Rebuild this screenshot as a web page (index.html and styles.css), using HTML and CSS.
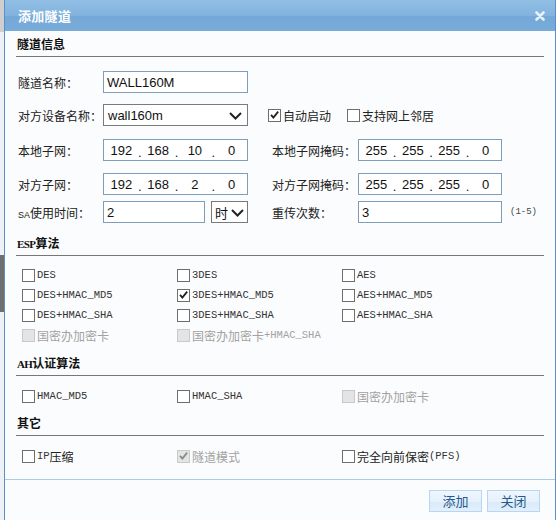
FILE: index.html
```html
<!DOCTYPE html>
<html>
<head>
  <meta charset="UTF-8">
  <title>添加隧道</title>
  <link rel="stylesheet" href="styles.css">
</head>
<body>
  <div class="dialog">
    <div class="dialog-title">
      <span class="title-text">添加隧道</span>
      <span class="close">
        <svg width="10" height="10" viewBox="0 0 10 10"><path d="M1.5 1.5 L8.5 8.5 M8.5 1.5 L1.5 8.5" stroke="#e8f1fa" stroke-width="2.6" stroke-linecap="round"/></svg>
      </span>
    </div>

    <div class="dialog-body">
      <h3 class="section first">隧道信息</h3>

      <div class="form-row r1">
        <span class="lbl">隧道名称：</span>
        <div class="field txt w145">WALL160M</div>
      </div>

      <div class="form-row r2">
        <span class="lbl">对方设备名称：</span>
        <div class="field sel w145">
          <span>wall160m</span>
          <svg class="chev" width="13" height="8" viewBox="0 0 13 8"><path d="M1 1 L6.5 6.5 L12 1" fill="none" stroke="#222" stroke-width="2"/></svg>
        </div>
        <label class="opt top first-opt"><span class="cb on"><svg width="12" height="12" viewBox="0 0 12 12"><path d="M2.2 5.8 L4.8 8.8 L10 2.4" fill="none" stroke="#222" stroke-width="2"/></svg></span>自动启动</label>
        <label class="opt top"><span class="cb"></span>支持网上邻居</label>
      </div>

      <div class="form-row r3">
        <span class="lbl">本地子网：</span>
        <div class="field ip w145">
          <span class="oct">192</span><span class="dot">.</span><span class="oct">168</span><span class="dot">.</span><span class="oct">10</span><span class="dot">.</span><span class="oct">0</span>
        </div>
        <span class="lbl right">本地子网掩码：</span>
        <div class="field ip w144">
          <span class="oct">255</span><span class="dot">.</span><span class="oct">255</span><span class="dot">.</span><span class="oct">255</span><span class="dot">.</span><span class="oct">0</span>
        </div>
      </div>

      <div class="form-row r4">
        <span class="lbl">对方子网：</span>
        <div class="field ip w145">
          <span class="oct">192</span><span class="dot">.</span><span class="oct">168</span><span class="dot">.</span><span class="oct">2</span><span class="dot">.</span><span class="oct">0</span>
        </div>
        <span class="lbl right">对方子网掩码：</span>
        <div class="field ip w144">
          <span class="oct">255</span><span class="dot">.</span><span class="oct">255</span><span class="dot">.</span><span class="oct">255</span><span class="dot">.</span><span class="oct">0</span>
        </div>
      </div>

      <div class="form-row r5">
        <span class="lbl"><span class="sm">SA</span>使用时间：</span>
        <div class="field txt w102">2</div>
        <div class="field sel unit">
          <span>时</span>
          <svg class="chev" width="13" height="8" viewBox="0 0 13 8"><path d="M1 1 L6.5 6.5 L12 1" fill="none" stroke="#222" stroke-width="2"/></svg>
        </div>
        <span class="lbl right">重传次数：</span>
        <div class="field txt w144">3</div>
        <span class="hint">(1-5)</span>
      </div>

      <h3 class="section esp"><span class="en">ESP</span>算法</h3>
      <div class="opts esp-opts">
        <label class="opt"><span class="cb"></span><span class="en">DES</span></label>
        <label class="opt"><span class="cb"></span><span class="en">3DES</span></label>
        <label class="opt"><span class="cb"></span><span class="en">AES</span></label>
        <label class="opt"><span class="cb"></span><span class="en">DES+HMAC_MD5</span></label>
        <label class="opt"><span class="cb on"><svg width="12" height="12" viewBox="0 0 12 12"><path d="M2.2 5.8 L4.8 8.8 L10 2.4" fill="none" stroke="#222" stroke-width="2"/></svg></span><span class="en">3DES+HMAC_MD5</span></label>
        <label class="opt"><span class="cb"></span><span class="en">AES+HMAC_MD5</span></label>
        <label class="opt"><span class="cb"></span><span class="en">DES+HMAC_SHA</span></label>
        <label class="opt"><span class="cb"></span><span class="en">3DES+HMAC_SHA</span></label>
        <label class="opt"><span class="cb"></span><span class="en">AES+HMAC_SHA</span></label>
        <label class="opt off"><span class="cb"></span>国密办加密卡</label>
        <label class="opt off"><span class="cb"></span>国密办加密卡<span class="en">+HMAC_SHA</span></label>
      </div>

      <h3 class="section ah"><span class="en">AH</span>认证算法</h3>
      <div class="opts single">
        <label class="opt"><span class="cb"></span><span class="en">HMAC_MD5</span></label>
        <label class="opt"><span class="cb"></span><span class="en">HMAC_SHA</span></label>
        <label class="opt off"><span class="cb"></span>国密办加密卡</label>
      </div>

      <h3 class="section other">其它</h3>
      <div class="opts single">
        <label class="opt"><span class="cb"></span><span class="en">IP</span>压缩</label>
        <label class="opt off"><span class="cb on"><svg width="12" height="12" viewBox="0 0 12 12"><path d="M2.2 5.8 L4.8 8.8 L10 2.4" fill="none" stroke="#8a8a8a" stroke-width="2"/></svg></span>隧道模式</label>
        <label class="opt"><span class="cb"></span>完全向前保密<span class="en">(PFS)</span></label>
      </div>
    </div>

    <div class="dialog-foot">
      <button class="btn">添加</button>
      <button class="btn">关闭</button>
    </div>
  </div>
</body>
</html>
```

FILE: styles.css
```css
html, body {
  margin: 0;
  height: 100%;
}

body {
  font-family: "Noto Sans CJK SC", "Liberation Sans", sans-serif;
  font-size: 12px;
  color: #222;
  background: linear-gradient(to bottom, #cfcfcf 0, #cfcfcf 32px, #eef2f6 32px, #eef2f6 255px, #6f6f6f 255px, #6f6f6f 312px, #eef2f6 312px);
  overflow: hidden;
}

.dialog {
  margin-left: 4px;
  height: 520px;
  background: #fbfcfd;
  border-left: 1px solid #5b90c6;
  border-right: 1px solid #5b90c6;
}

/* title bar */
.dialog-title {
  height: 31px;
  display: flex;
  align-items: center;
  justify-content: space-between;
  padding: 0 10px 0 13px;
  background: linear-gradient(to bottom, #91bee4 0, #82b3de 50%, #73a8d8 52%, #79acd9 100%);
  color: #fff;
}

.title-text {
  font-size: 13px;
  font-weight: bold;
  letter-spacing: 0.3px;
}

.close {
  display: flex;
  margin-top: 1px;
}

/* section headings */
.section {
  margin: 0 11px;
  padding-left: 1px;
  height: 24px;
  line-height: 24px;
  font-size: 12px;
  font-weight: bold;
  color: #111;
  border-bottom: 1px solid #777;
}

.section.first { margin-top: 1px; }
.section.esp { margin-top: 8px; }
.section.ah { margin-top: 6px; }
.section.other { margin-top: 5px; }

.section .en {
  font-family: "Liberation Serif", serif;
  font-size: 11px;
  letter-spacing: -0.6px;
}

/* form rows */
.form-row {
  display: flex;
  align-items: center;
  height: 22px;
  padding-left: 13px;
}

.r1 { margin-top: 14px; }
.r2 { margin-top: 11px; }
.r3 { margin-top: 13px; }
.r4 { margin-top: 12px; }
.r5 { margin-top: 6px; }

.lbl {
  width: 85px;
  flex: none;
  color: #222;
}

.lbl.right {
  width: 86px;
  margin-left: 24px;
}

.lbl .sm {
  font-family: "Liberation Sans", sans-serif;
  font-size: 9px;
}

.field {
  box-sizing: border-box;
  height: 22px;
  border: 1px solid #7f9db9;
  background: #fff;
  font-family: "Liberation Sans", sans-serif;
  font-size: 13px;
  color: #111;
  display: flex;
  align-items: center;
  flex: none;
}

.w145 { width: 145px; }
.w144 { width: 144px; }
.w102 { width: 102px; }

.txt { padding-left: 3px; }

.sel {
  justify-content: space-between;
  padding: 0 5px 0 4px;
  border-color: #7a7a7a;
}

.sel .chev { margin-top: 1px; }

.unit {
  width: 37px;
  margin-left: 6px;
  font-family: "Noto Sans CJK SC", sans-serif;
  padding: 0 3px 0 3px;
}

.ip .oct {
  width: 32px;
  text-align: center;
}

.ip .dot {
  width: 6px;
  text-align: center;
  position: relative;
  top: 2px;
}

.ip .oct:first-child { margin-left: 2px; }

.hint {
  margin-left: 8px;
  font-family: "Liberation Mono", monospace;
  font-size: 9px;
  color: #444;
}

/* checkboxes */
.opt {
  display: flex;
  align-items: center;
  height: 20px;
  color: #222;
  white-space: nowrap;
}

.opt .en {
  font-family: "Liberation Mono", monospace;
  font-size: 10.5px;
  color: #333;
}

.cb {
  box-sizing: border-box;
  width: 13px;
  height: 13px;
  border: 1px solid #6e6e6e;
  background: #fff;
  margin-right: 2px;
  display: flex;
  align-items: center;
  justify-content: center;
  flex: none;
}

.cb svg { display: block; }

.opt.off { color: #a2a2a2; }
.opt.off .en { color: #a2a2a2; }

.opt.off .cb {
  border-color: #c9c9c9;
  background: #e4e4e4;
}

.opt.top.first-opt { margin-left: 20px; }
.opt.top + .opt.top { margin-left: 16px; }

.opts {
  display: grid;
  grid-template-columns: 155px 165px 1fr;
  grid-auto-rows: 20px;
  padding-left: 17px;
}

.esp-opts { margin-top: 9px; }
.single { margin-top: 10px; }

/* footer */
.dialog-foot {
  margin-top: 13px;
  border-top: 1px solid #a9cde9;
  padding: 10px 15px 0 0;
  display: flex;
  justify-content: flex-end;
  gap: 5px;
}

.btn {
  width: 53px;
  height: 22px;
  padding: 0;
  border: 1px solid #b9d6ee;
  background: linear-gradient(to bottom, #eef6fe 0, #e6f1fc 55%, #d9eafa 56%, #e3effb 100%);
  color: #23598c;
  font-family: "Noto Sans CJK SC", sans-serif;
  font-size: 13px;
  line-height: 20px;
}
```
